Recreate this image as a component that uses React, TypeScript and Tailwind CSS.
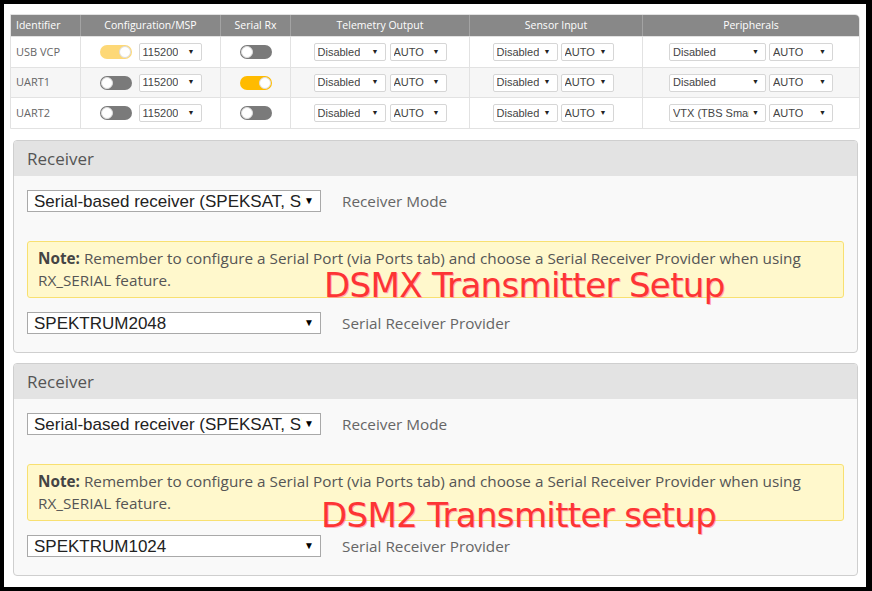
import React from 'react';

type Row = {
    id: string;
    msp: 'on' | 'dim' | 'off';
    rx: 'on' | 'dim' | 'off';
    periph: string;
    striped?: boolean;
};

const rows: Row[] = [
    { id: 'USB VCP', msp: 'dim', rx: 'off', periph: 'Disabled' },
    { id: 'UART1', msp: 'off', rx: 'on', periph: 'Disabled', striped: true },
    { id: 'UART2', msp: 'off', rx: 'off', periph: 'VTX (TBS SmartAudio)' },
];

function Toggle({ state }: { state: 'on' | 'dim' | 'off' }) {
    const track = state === 'on' ? 'bg-[#ffbb00]' : state === 'dim' ? 'bg-[#fdd877]' : 'bg-[#7a7a7a]';
    return (
        <div className={`relative h-[14px] w-[32px] shrink-0 rounded-full ${track}`}>
            <div
                className={`absolute top-px h-[12px] w-[12px] rounded-full border border-[#ddd] bg-white ${
                    state === 'off' ? 'left-px' : 'right-px'
                }`}
            />
        </div>
    );
}

function MiniSelect({ value, width }: { value: string; width: string }) {
    return (
        <div
            className={`relative flex h-[18px] shrink-0 items-center overflow-hidden rounded-[2px] border border-[#d6d6d6] bg-white pr-[16px] pl-[3px] font-['Liberation_Sans',Arial,sans-serif] text-[11px] text-[#444] ${width}`}
        >
            <span className="overflow-hidden whitespace-nowrap">{value}</span>
            <span className="absolute right-[6px] text-[7px] text-[#222]">▼</span>
        </div>
    );
}

function PortsTable() {
    const th = 'border-r border-[#a3a3a3] text-center font-normal last:border-r-0';
    const td = 'border-t border-r border-[#e2e2e2] last:border-r-0';
    return (
        <table className="w-[850px] table-fixed border-separate border-spacing-0 overflow-hidden rounded-tr-[5px] border border-[#e2e2e2] font-['Open_Sans',sans-serif] text-[10.5px]">
            <colgroup>
                <col className="w-[70px]" />
                <col className="w-[140px]" />
                <col className="w-[70px]" />
                <col className="w-[179px]" />
                <col className="w-[173px]" />
                <col />
            </colgroup>
            <thead>
                <tr className="h-[21px] bg-[#888888] text-white">
                    <th className={`${th} pl-[5px] text-left`}>Identifier</th>
                    <th className={th}>Configuration/MSP</th>
                    <th className={th}>Serial Rx</th>
                    <th className={th}>Telemetry Output</th>
                    <th className={th}>Sensor Input</th>
                    <th className={th}>Peripherals</th>
                </tr>
            </thead>
            <tbody>
                {rows.map((r, i) => (
                    <tr
                        key={r.id}
                        className={`${i === 1 ? 'h-[30px]' : 'h-[31px]'} ${r.striped ? 'bg-[#f6f6f6]' : 'bg-white'}`}
                    >
                        <td className={`${td} pl-[5px] text-[11px] text-[#666]`}>{r.id}</td>
                        <td className={td}>
                            <div className="flex items-center justify-center gap-[7px]">
                                <Toggle state={r.msp} />
                                <MiniSelect value="115200" width="w-[63px]" />
                            </div>
                        </td>
                        <td className={td}>
                            <div className="flex justify-center">
                                <Toggle state={r.rx} />
                            </div>
                        </td>
                        <td className={td}>
                            <div className="flex items-center justify-center gap-[4px]">
                                <MiniSelect value="Disabled" width="w-[72px]" />
                                <MiniSelect value="AUTO" width="w-[57px]" />
                            </div>
                        </td>
                        <td className={td}>
                            <div className="flex items-center justify-center gap-[3px] pr-[6px]">
                                <MiniSelect value="Disabled" width="w-[65px]" />
                                <MiniSelect value="AUTO" width="w-[53px]" />
                            </div>
                        </td>
                        <td className={td}>
                            <div className="flex items-center justify-center gap-[3px]">
                                <MiniSelect value={r.periph} width="w-[97px]" />
                                <MiniSelect value="AUTO" width="w-[64px]" />
                            </div>
                        </td>
                    </tr>
                ))}
            </tbody>
        </table>
    );
}

function BigSelect({ value }: { value: string }) {
    return (
        <div className="relative flex h-[22px] w-[294px] shrink-0 items-center border border-[#a9a9a9] bg-white pl-[6px] font-['Liberation_Sans',Arial,sans-serif] text-[17px] leading-none text-[#222]">
            <span className="w-[268px] overflow-hidden whitespace-nowrap">{value}</span>
            <span className="absolute right-[6px] text-[10px] text-black">▼</span>
        </div>
    );
}

function ReceiverPanel({ provider, overlay, overlayPos }: { provider: string; overlay: string; overlayPos: string }) {
    return (
        <div className="relative w-[845px] overflow-hidden rounded-[4px] border border-[#cfcfcf] bg-[#f9f9f9] font-['Open_Sans',sans-serif]">
            <div className="flex h-[35px] items-center bg-[#e3e3e3] pl-[13px] text-[17px] text-[#555]">Receiver</div>
            <div className="flex flex-col px-[13px] pt-[14px] pb-[17px]">
                <div className="flex items-center gap-[21px]">
                    <BigSelect value="Serial-based receiver (SPEKSAT, SBUS, SUMD)" />
                    <span className="text-[15.3px] text-[#666]">Receiver Mode</span>
                </div>
                <div className="mt-[28px] h-[57px] rounded-[3px] border border-[#f8e071] bg-[#fff8cc] px-[10px] pt-[5px] text-[15.3px] leading-[22px] whitespace-nowrap text-[#555]">
                    <b className="text-[#444]">Note:</b> Remember to configure a Serial Port (via Ports tab) and choose a
                    Serial Receiver Provider when using
                    <br />
                    RX_SERIAL feature.
                </div>
                <div className="mt-[14px] flex items-center gap-[21px]">
                    <BigSelect value={provider} />
                    <span className="text-[15.3px] text-[#666]">Serial Receiver Provider</span>
                </div>
            </div>
            <div
                className={`absolute font-['DejaVu_Sans',Verdana,sans-serif] text-[34px] leading-[34px] tracking-[-0.65px] whitespace-nowrap text-[#fd3434] [text-shadow:1px_1px_0_rgba(255,120,150,0.6)] ${overlayPos}`}
            >
                {overlay}
            </div>
        </div>
    );
}

export default function App() {
    return (
        <div className="h-[591px] w-[872px] overflow-hidden bg-black pt-[4px] pr-[6px] pb-[4px] pl-[4px]">
            <div className="h-full w-full bg-white pt-[10px] pl-[6px]">
                <PortsTable />
                <div className="mt-[11px] ml-[3px] flex flex-col gap-[10px]">
                    <ReceiverPanel provider="SPEKTRUM2048" overlay="DSMX Transmitter Setup" overlayPos="top-[127px] left-[310px]" />
                    <ReceiverPanel provider="SPEKTRUM1024" overlay="DSM2 Transmitter setup" overlayPos="top-[134px] left-[307px]" />
                </div>
            </div>
        </div>
    );
}
